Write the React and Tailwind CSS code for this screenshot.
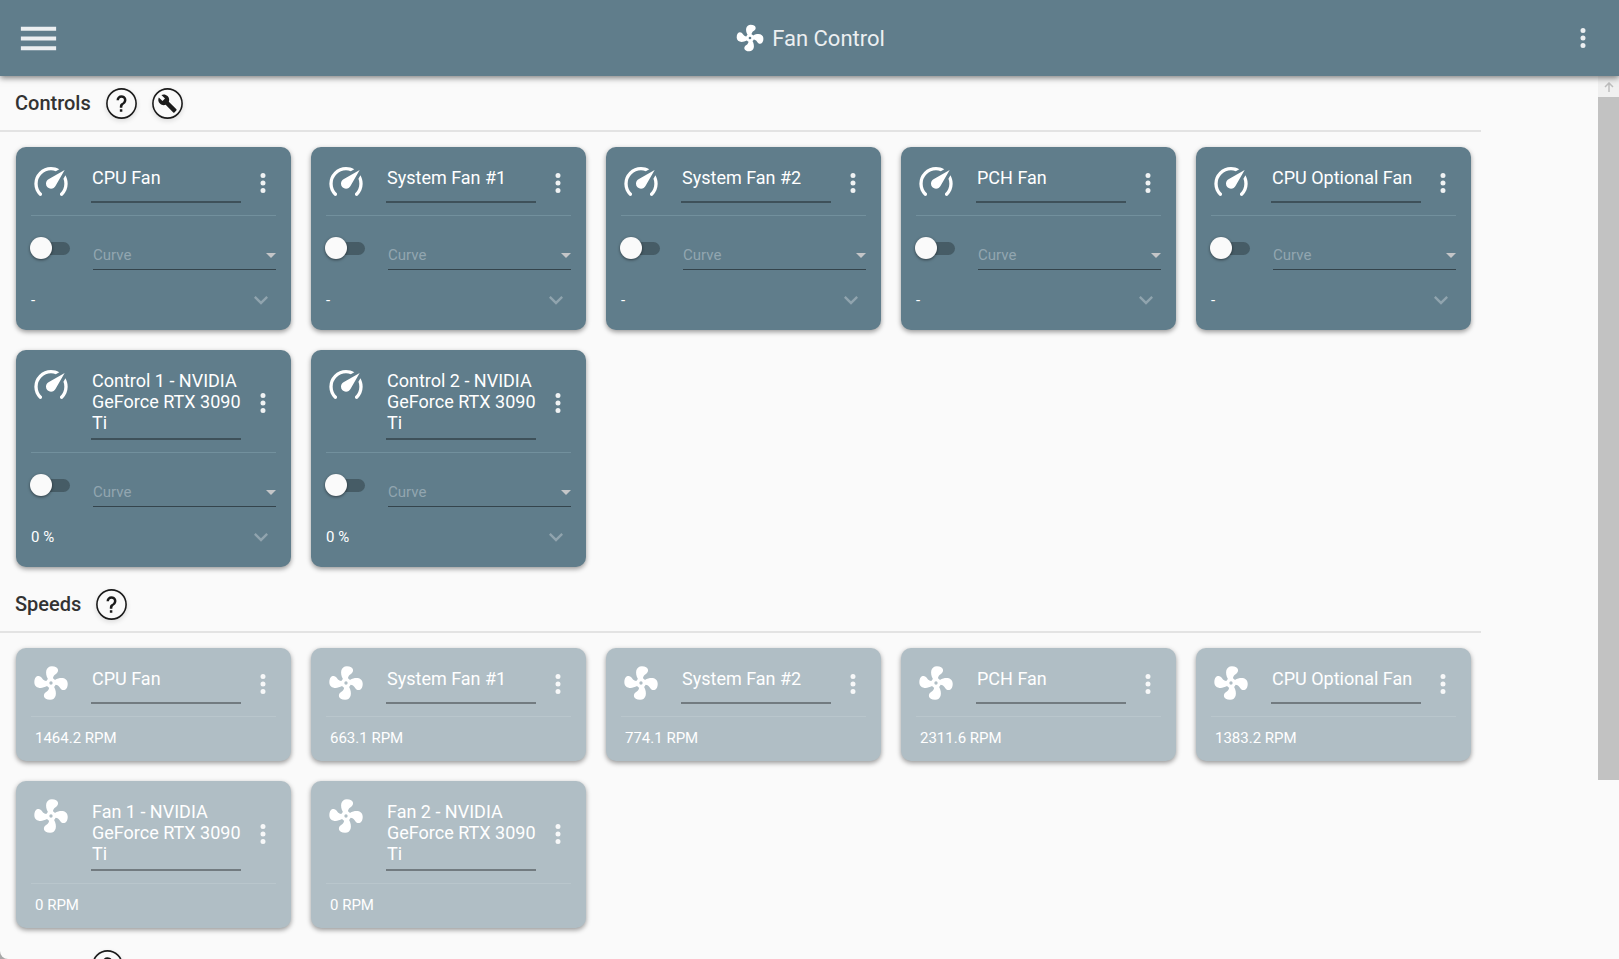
import { useState } from 'react';

const controls = [
  { id: 'c1', name: 'CPU Fan', value: '-' },
  { id: 'c2', name: 'System Fan #1', value: '-' },
  { id: 'c3', name: 'System Fan #2', value: '-' },
  { id: 'c4', name: 'PCH Fan', value: '-' },
  { id: 'c5', name: 'CPU Optional Fan', value: '-' },
  { id: 'c6', name: 'Control 1 - NVIDIA GeForce RTX 3090 Ti', value: '0 %' },
  { id: 'c7', name: 'Control 2 - NVIDIA GeForce RTX 3090 Ti', value: '0 %' },
];

const speeds = [
  { id: 's1', name: 'CPU Fan', value: '1464.2 RPM' },
  { id: 's2', name: 'System Fan #1', value: '663.1 RPM' },
  { id: 's3', name: 'System Fan #2', value: '774.1 RPM' },
  { id: 's4', name: 'PCH Fan', value: '2311.6 RPM' },
  { id: 's5', name: 'CPU Optional Fan', value: '1383.2 RPM' },
  { id: 's6', name: 'Fan 1 - NVIDIA GeForce RTX 3090 Ti', value: '0 RPM' },
  { id: 's7', name: 'Fan 2 - NVIDIA GeForce RTX 3090 Ti', value: '0 RPM' },
];

const icons = {
  menu: 'M3,6H21V8H3V6M3,11H21V13H3V11M3,16H21V18H3V16Z',
  dots: 'M12,16A2,2 0 0,1 14,18A2,2 0 0,1 12,20A2,2 0 0,1 10,18A2,2 0 0,1 12,16M12,10A2,2 0 0,1 14,12A2,2 0 0,1 12,14A2,2 0 0,1 10,12A2,2 0 0,1 12,10M12,4A2,2 0 0,1 14,6A2,2 0 0,1 12,8A2,2 0 0,1 10,6A2,2 0 0,1 12,4Z',
  fan: 'M12,11A1,1 0 0,0 11,12A1,1 0 0,0 12,13A1,1 0 0,0 13,12A1,1 0 0,0 12,11M12.5,2C17,2 17.11,5.57 14.75,6.75C13.76,7.24 13.32,8.29 13.13,9.22C13.61,9.42 14.03,9.73 14.35,10.13C18.05,8.13 22.03,8.92 22.03,12.5C22.03,17 18.46,17.1 17.28,14.73C16.78,13.74 15.72,13.3 14.79,13.11C14.59,13.59 14.28,14 13.88,14.34C15.87,18.03 15.08,22 11.5,22C7,22 6.91,18.42 9.27,17.24C10.25,16.75 10.69,15.71 10.89,14.79C10.4,14.59 9.97,14.27 9.65,13.87C5.96,15.85 2,15.07 2,11.5C2,7 5.56,6.89 6.74,9.26C7.24,10.25 8.29,10.68 9.22,10.87C9.41,10.39 9.73,9.97 10.14,9.65C8.15,5.96 8.94,2 12.5,2Z',
  gauge: 'M12,16A3,3 0 0,1 9,13C9,11.88 9.61,10.9 10.5,10.39L20.21,4.77L14.68,14.35C14.18,15.33 13.17,16 12,16M12,3C13.81,3 15.5,3.5 16.97,4.32L14.87,5.53C14,5.19 13,5 12,5A8,8 0 0,0 4,13C4,15.21 4.89,17.21 6.34,18.65H6.35C6.74,19.04 6.74,19.67 6.35,20.06C5.96,20.45 5.32,20.45 4.93,20.07V20.07C3.12,18.26 2,15.76 2,13A10,10 0 0,1 12,3M22,13C22,15.76 20.88,18.26 19.07,20.07V20.07C18.68,20.45 18.05,20.45 17.66,20.06C17.27,19.67 17.27,19.04 17.66,18.65V18.65C19.11,17.2 20,15.21 20,13C20,12 19.81,11 19.46,10.1L20.67,8C21.5,9.5 22,11.18 22,13Z',
  wrench: 'M22.7,19L13.6,9.9C14.5,7.6 14,4.9 12.1,3C10.1,1 7.1,0.6 4.7,1.7L9,6L6,9L1.6,4.7C0.4,7.1 0.9,10.1 2.9,12.1C4.8,14 7.5,14.5 9.8,13.6L18.9,22.7C19.3,23.1 19.9,23.1 20.3,22.7L22.6,20.4C23.1,20 23.1,19.3 22.7,19Z',
  help: 'M10,19H13V22H10V19M12,2C17.35,2.22 19.68,7.62 16.5,11.67C15.67,12.67 14.33,13.33 13.67,14.17C13,15 13,16 13,17H10C10,15.33 10,13.92 10.67,12.92C11.33,11.92 12.67,11.33 13.5,10.67C15.92,8.43 15.32,5.26 12,5A3,3 0 0,0 9,8H6A6,6 0 0,1 12,2Z',
  chevron: 'M7.41,8.58L12,13.17L16.59,8.58L18,10L12,16L6,10L7.41,8.58Z',
};

const Icon = ({ path, className }) => (
  <svg viewBox="0 0 24 24" fill="currentColor" aria-hidden="true" className={className}>
    <path d={path} />
  </svg>
);

const RoundButton = ({ label, path }) => (
  <button type="button" aria-label={label} className="rounded-full text-[#1b1b1b] shadow-[0_2px_5px_rgba(0,0,0,0.12)]">
    <svg viewBox="0 0 31 31" className="size-[31px]" aria-hidden="true">
      <circle cx="15.5" cy="15.5" r="14.6" fill="none" stroke="currentColor" strokeWidth="1.6" />
      <g transform="translate(5.5 5.5) scale(0.8333)">
        <path d={path} fill="currentColor" />
      </g>
    </svg>
  </button>
);

const Section = ({ title, titleClass = 'text-[#333]', tools = false, children }) => (
  <section className="pb-[10px]">
    <header className="flex h-14 items-center gap-[15px] border-b-2 border-[#e3e3e3] pl-[15px]">
      <h2 className={`text-xl font-medium ${titleClass}`}>{title}</h2>
      <RoundButton label={`${title} help`} path={icons.help} />
      {tools && <RoundButton label={`${title} setup`} path={icons.wrench} />}
    </header>
    <div className="flex flex-wrap items-start gap-5 pt-[15px] pl-4">{children}</div>
  </section>
);

const CardHeader = ({ icon, name, lineClass }) => {
  const [text, setText] = useState(name);

  return (
    <div className={`flex items-center justify-between border-b pb-3 ${lineClass}`}>
      <Icon path={icon} className="size-10 shrink-0 self-start" />
      <textarea
        aria-label="Name"
        rows={1}
        value={text}
        onChange={(e) => setText(e.target.value)}
        className="mt-[5px] ml-[13px] field-sizing-content min-h-9 w-[150px] resize-none overflow-hidden border-b-2 border-black/35 pb-[5px] pl-px text-lg leading-[21px] outline-none"
      />
      <button type="button" aria-label={`${text} menu`} className="-mr-[2px]">
        <Icon path={icons.dots} className="size-[30px] opacity-90" />
      </button>
    </div>
  );
};

const ControlCard = ({ id, name, value }) => {
  const [enabled, setEnabled] = useState(false);

  return (
    <article className="w-[275px] rounded-[10px] bg-[#607d8b] px-[15px] pt-[15px] text-white shadow-[0_2px_5px_rgba(0,0,0,0.4)]">
      <CardHeader icon={icons.gauge} name={name} lineClass="border-[#72909d]" />
      <div className="flex h-[54px] items-end">
        <div className="flex w-[62px] shrink-0 self-center pt-[10px] pl-[5px]">
          <input
            type="checkbox"
            aria-label={`Enable ${name}`}
            checked={enabled}
            onChange={(e) => setEnabled(e.target.checked)}
            className="relative h-[13px] w-[34px] appearance-none rounded-full bg-[#465c66] before:absolute before:-top-[5px] before:-left-[6px] before:size-[22px] before:rounded-full before:bg-[#fafafa] before:shadow-[0_1px_3px_rgba(0,0,0,0.5)] checked:before:left-[18px]"
          />
        </div>
        <div className="relative flex-1">
          <select
            id={`${id}-curve`}
            aria-label="Curve"
            className="h-[31px] w-full appearance-none border-b border-black/45 pt-[2px] text-[15px] text-[#92a6b0] outline-none"
          >
            <option>Curve</option>
          </select>
          <svg viewBox="0 0 10 5" className="pointer-events-none absolute top-[14px] right-0 h-[5px] w-[10px] fill-[#c4c6c8]" aria-hidden="true">
            <path d="M0 0H10L5 5Z" />
          </svg>
        </div>
      </div>
      <div className="flex h-[60px] items-center justify-between text-[15px]">
        <span>{value}</span>
        <button type="button" aria-label="Expand" className="mr-px">
          <Icon path={icons.chevron} className="size-7 text-[#90a4ae]" />
        </button>
      </div>
    </article>
  );
};

const SpeedCard = ({ name, value }) => (
  <article className="w-[275px] rounded-[10px] bg-[#b0bec5] px-[15px] pt-[15px] text-white shadow-[0_2px_5px_rgba(0,0,0,0.4)]">
    <CardHeader icon={icons.fan} name={name} lineClass="border-[#b9c6cc]" />
    <p className="h-11 px-1 text-[15px] leading-[42px]">{value}</p>
  </article>
);

const ScrollBar = () => (
  <div className="flex w-[21px] shrink-0 flex-col" aria-hidden="true">
    <div className="flex h-[21px] shrink-0 items-center justify-center bg-[#f0f0f0]">
      <svg viewBox="0 0 10 10" className="size-[10px] fill-none stroke-[#bdbdbd]" strokeWidth="1.5">
        <path d="M5 10V1M1 5L5 1L9 5" />
      </svg>
    </div>
    <div className="min-h-0 flex-1">
      <div className="h-[79.2%] bg-[#c2c2c2]" />
    </div>
  </div>
);

export default function App() {
  return (
    <div className="bg-[#a8a8a8]">
      <div className="flex h-screen flex-col overflow-hidden rounded-bl-lg bg-[#fafafa] font-[Roboto,sans-serif]">
        <header className="z-10 grid h-[76px] shrink-0 grid-cols-[1fr_auto_1fr] items-center bg-[#607d8b] px-[21px] text-[#eceff1] shadow-[0_2px_6px_rgba(0,0,0,0.5)]">
          <button type="button" aria-label="Menu" className="-ml-[6px] justify-self-start">
            <Icon path={icons.menu} className="size-[47px]" />
          </button>
          <h1 className="flex items-center gap-[6px] text-[22px]">
            <Icon path={icons.fan} className="size-8 text-white" />
            Fan Control
          </h1>
          <button type="button" aria-label="More" className="justify-self-end">
            <Icon path={icons.dots} className="size-[30px]" />
          </button>
        </header>
        <div className="flex min-h-0 flex-1">
          <main className="min-w-0 flex-1 overflow-hidden pr-[117px]">
            <Section title="Controls" tools>
              {controls.map((c) => (
                <ControlCard key={c.id} {...c} />
              ))}
            </Section>
            <Section title="Speeds">
              {speeds.map((s) => (
                <SpeedCard key={s.id} name={s.name} value={s.value} />
              ))}
            </Section>
            <Section title="Curves" titleClass="invisible" />
          </main>
          <ScrollBar />
        </div>
      </div>
    </div>
  );
}
